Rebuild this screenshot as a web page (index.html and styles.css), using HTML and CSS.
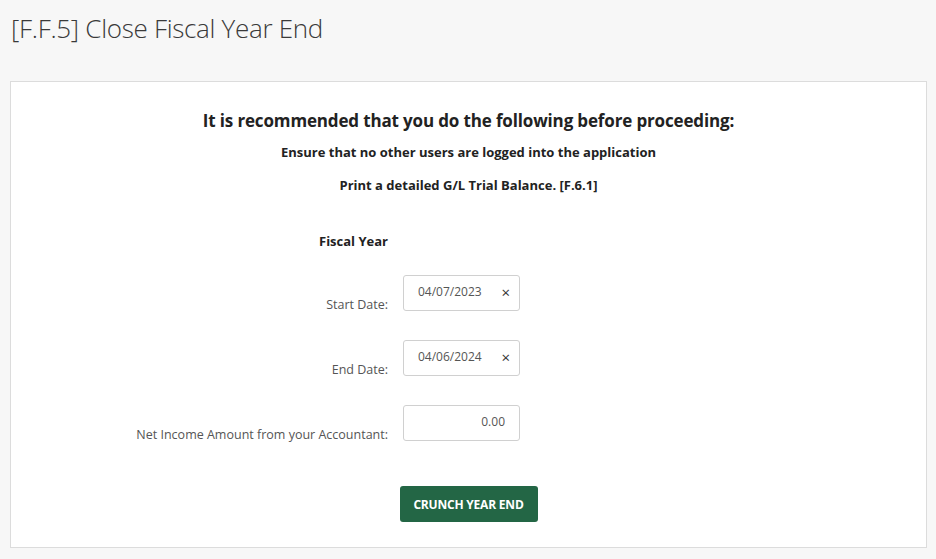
FILE: index.html
```html
<!DOCTYPE html>
<html lang="en">
<head>
  <meta charset="UTF-8">
  <title>[F.F.5] Close Fiscal Year End</title>
  <link rel="stylesheet" href="styles.css">
</head>
<body>
  <h1 class="page-title">[F.F.5] Close Fiscal Year End</h1>

  <div class="panel">
    <h2 class="notice-title">It is recommended that you do the following before proceeding:</h2>
    <p class="notice">Ensure that no other users are logged into the application</p>
    <p class="notice notice-last">Print a detailed G/L Trial Balance. [F.6.1]</p>

    <!-- Fiscal year form -->
    <form class="year-form">
      <div class="section-label">Fiscal Year</div>
      <div></div>

      <label class="field-label" for="startDate">Start Date:</label>
      <div class="date-input">
        <input id="startDate" type="text" value="04/07/2023">
        <span class="clear">&times;</span>
      </div>

      <label class="field-label" for="endDate">End Date:</label>
      <div class="date-input">
        <input id="endDate" type="text" value="04/06/2024">
        <span class="clear">&times;</span>
      </div>

      <label class="field-label" for="netIncome">Net Income Amount from your Accountant:</label>
      <div class="date-input">
        <input id="netIncome" class="amount" type="text" value="0.00">
      </div>
    </form>

    <div class="actions">
      <button type="button" class="btn-crunch">Crunch Year End</button>
    </div>
  </div>
</body>
</html>
```

FILE: styles.css
```css
body {
  margin: 0;
  padding: 0 9px 0 10px;
  background-color: #f7f7f7;
  font-family: "Open Sans", "Noto Sans", Arial, sans-serif;
  color: #333;
}
.page-title {
  margin: 0;
  padding: 10px 0 0 1px;
  height: 81px;
  box-sizing: border-box;
  font-size: 26px;
  font-weight: 300;
  letter-spacing: -0.3px;
  color: #3a3a3a;
  line-height: 36px;
}
.panel {
  background: #fff;
  border: 1px solid #dcdcdc;
  padding: 27px 0 25px;
}
.notice-title {
  margin: 0;
  text-align: center;
  font-size: 17px;
  font-weight: 700;
  letter-spacing: -0.15px;
  line-height: 24px;
  color: #222;
}
.notice {
  margin: 10px 0 0;
  text-align: center;
  font-size: 13px;
  font-weight: 700;
  line-height: 18px;
  color: #222;
}
.notice + .notice {
  margin-top: 15px;
}
.year-form {
  display: grid;
  grid-template-columns: 377px 117px;
  column-gap: 15px;
  row-gap: 29px;
  margin-top: 38px;
}
.section-label {
  text-align: right;
  font-size: 13px;
  font-weight: 700;
  line-height: 18px;
  color: #222;
  margin-bottom: -4px;
}
.field-label {
  align-self: end;
  text-align: right;
  font-size: 12.5px;
  line-height: 18px;
  color: #555;
  margin-bottom: -3px;
}
.date-input {
  position: relative;
  height: 36px;
}
.date-input input {
  width: 100%;
  height: 36px;
  box-sizing: border-box;
  border: 1px solid #d0d0d0;
  border-radius: 3px;
  padding: 0 14px 4px;
  font-family: inherit;
  font-size: 12px;
  color: #555;
  background: #fff;
}
.date-input input.amount {
  text-align: right;
}
.clear {
  position: absolute;
  right: 10px;
  top: 9px;
  font-size: 15px;
  line-height: 16px;
  color: #333;
}
.actions {
  margin-top: 45px;
  text-align: center;
}
.btn-crunch {
  width: 138px;
  height: 36px;
  border: none;
  border-radius: 3px;
  background-color: #236645;
  color: #fff;
  font-family: inherit;
  font-size: 12px;
  font-weight: 700;
  text-transform: uppercase;
  letter-spacing: -0.2px;
  cursor: pointer;
}
```
